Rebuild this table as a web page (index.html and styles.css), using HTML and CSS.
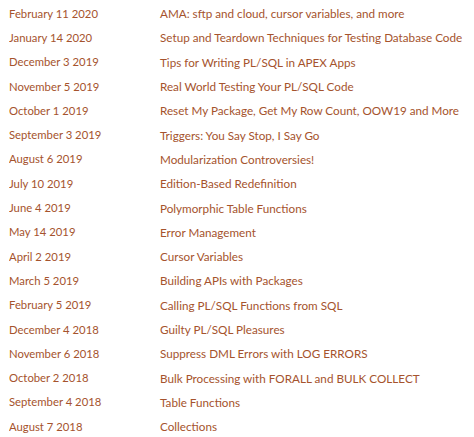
FILE: index.html
```html
<!DOCTYPE html>
<html>
<head>
<meta charset="utf-8">
<link rel="stylesheet" href="styles.css">
</head>
<body>
<div class="list">
  <div class="date">February 11 2020</div><div class="title">AMA: sftp and cloud, cursor variables, and more</div>
  <div class="date">January 14 2020</div><div class="title">Setup and Teardown Techniques for Testing Database Code</div>
  <div class="date">December 3 2019</div><div class="title">Tips for Writing PL/SQL in APEX Apps</div>
  <div class="date">November 5 2019</div><div class="title">Real World Testing Your PL/SQL Code</div>
  <div class="date">October 1 2019</div><div class="title">Reset My Package, Get My Row Count, OOW19 and More</div>
  <div class="date">September 3 2019</div><div class="title">Triggers: You Say Stop, I Say Go</div>
  <div class="date">August 6 2019</div><div class="title">Modularization Controversies!</div>
  <div class="date">July 10 2019</div><div class="title">Edition-Based Redefinition</div>
  <div class="date">June 4 2019</div><div class="title">Polymorphic Table Functions</div>
  <div class="date">May 14 2019</div><div class="title">Error Management</div>
  <div class="date">April 2 2019</div><div class="title">Cursor Variables</div>
  <div class="date">March 5 2019</div><div class="title">Building APIs with Packages</div>
  <div class="date">February 5 2019</div><div class="title">Calling PL/SQL Functions from SQL</div>
  <div class="date">December 4 2018</div><div class="title">Guilty PL/SQL Pleasures</div>
  <div class="date">November 6 2018</div><div class="title">Suppress DML Errors with LOG ERRORS</div>
  <div class="date">October 2 2018</div><div class="title">Bulk Processing with FORALL and BULK COLLECT</div>
  <div class="date">September 4 2018</div><div class="title">Table Functions</div>
  <div class="date">August 7 2018</div><div class="title">Collections</div>
</div>
</body>
</html>
```
FILE: styles.css
```css
html, body {
  background: #ffffff;
}
body {
  margin: 1px 0 0 9px;
  font-family: "Lato", "Noto Sans", sans-serif;
  font-size: 11.7px;
  color: #a5532d;
}
.list {
  display: grid;
  grid-template-columns: 151px 1fr;
  grid-auto-rows: 24.3px;
  align-items: center;
}
.date {
  font-size: 11.3px;
  white-space: nowrap;
}
.title {
  white-space: nowrap;
}
```
